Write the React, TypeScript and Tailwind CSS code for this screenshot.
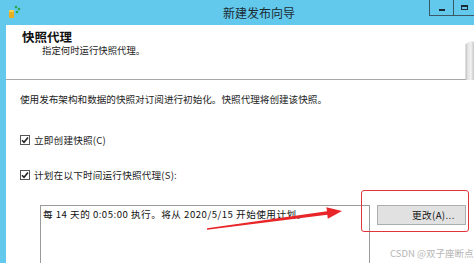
import React from 'react';

const FONT = "font-['Noto_Sans_CJK_SC','Noto_Sans',sans-serif]";

function WizardIcon() {
  return (
    <svg width="14" height="14" viewBox="0 0 14 14" className="mt-[5px] ml-[8px] flex-shrink-0">
      <rect x="1" y="5" width="5" height="8" rx="1" fill="#e8b020" />
      <rect x="1" y="5" width="5" height="2" rx="1" fill="#f6d35a" />
      <circle cx="8" cy="2" r="1.3" fill="#27a84a" />
      <circle cx="11" cy="4" r="1.3" fill="#27a84a" />
      <circle cx="9" cy="7" r="1.3" fill="#27a84a" />
    </svg>
  );
}

function Check({ label }: { label: string }) {
  return (
    <div className="flex items-center">
      <div className="w-[10px] h-[10px] border border-[#555] bg-white flex items-center justify-center">
        <svg width="8" height="8" viewBox="0 0 8 8">
          <path d="M1 4.2 L3 6.2 L7 1.5" fill="none" stroke="#222" strokeWidth="1.6" />
        </svg>
      </div>
      <span className="ml-[4px] text-[9.6px] leading-[12px] text-[#222] tracking-[0.2px]">{label}</span>
    </div>
  );
}

export default function App() {
  return (
    <div className={`relative w-[474px] h-[263px] overflow-hidden bg-[#62c9ec] ${FONT}`}>
      {/* title bar */}
      <div className="h-[25px] flex items-start">
        <WizardIcon />
        <div className="ml-[201px] mt-[5px] text-[12px] leading-[15px] text-[#1c2a33]">新建发布向导</div>
        <div className="ml-auto flex h-[16px]">
          <div className="w-[24px] h-[16px] border-l border-b border-[#3b5866] flex items-center justify-center">
            <div className="w-[6px] h-[2px] bg-[#1c2a33] mt-[4px]" />
          </div>
          <div className="w-[21px] h-[16px] border-l border-b border-[#3b5866] flex items-start justify-center">
            <div className="w-[7px] h-[5px] border border-[#1c2a33] border-t-2 mt-[5px]" />
          </div>
        </div>
      </div>

      <div className="flex h-[238px]">
        <div className="w-[6px] flex-shrink-0" />
        <div className="flex-1 bg-white flex flex-col">
          {/* header */}
          <div className="h-[55px] flex border-b border-[#a8a8a8] flex-shrink-0">
            <div className="flex-1 pl-[16px] pt-[5px]">
              <div className="text-[12.5px] leading-[14px] font-bold text-[#111]">快照代理</div>
              <div className="ml-[20px] text-[9.4px] leading-[12px] text-[#222]">指定何时运行快照代理。</div>
            </div>
            <svg width="10" height="40" viewBox="0 0 10 40" className="mt-[15px] flex-shrink-0">
              <defs>
                <linearGradient id="cyl" x1="0" x2="1" y1="0" y2="0">
                  <stop offset="0%" stopColor="#d8d8d8" />
                  <stop offset="60%" stopColor="#f2f2f2" />
                  <stop offset="100%" stopColor="#c8c8c8" />
                </linearGradient>
              </defs>
              <path d="M2 4 Q6 0 10 2 L10 40 L2 40 Z" fill="url(#cyl)" />
              <path d="M2 4 L2 40" stroke="#bdbdbd" strokeWidth="1" />
            </svg>
          </div>
          <div className="h-px bg-white" />

          {/* body */}
          <div className="pl-[14px] pt-[13px] flex flex-col">
            <div className="text-[9.6px] leading-[12px] text-[#222]">
              使用发布架构和数据的快照对订阅进行初始化。快照代理将创建该快照。
            </div>
            <div className="mt-[29px]">
              <Check label="立即创建快照(C)" />
            </div>
            <div className="mt-[23px]">
              <Check label="计划在以下时间运行快照代理(S):" />
            </div>
            <div className="mt-[24px] flex items-start">
              <div className="ml-[20px] w-[330px] h-[70px] border border-[#9a9a9a] bg-white px-[2px] pt-[2px]">
                <div className="text-[9.6px] leading-[12px] text-[#111] whitespace-nowrap tracking-[0.5px]">
                  每 14 天的 0:05:00 执行。将从 2020/5/15 开始使用计划。
                </div>
              </div>
              <div className="ml-[7px] w-[89px] h-[20px] bg-[#e1e1e1] border border-[#adadad] flex items-center pl-[34px]">
                <span className="text-[9.6px] leading-[12px] text-[#111] whitespace-nowrap tracking-[0.4px]">更改(A)...</span>
              </div>
            </div>
          </div>
        </div>
      </div>

      {/* annotation overlays */}
      <div className="absolute left-[361px] top-[190px] w-[108px] h-[42px] border border-[#e2353b] rounded-[3px]" />
      <svg className="absolute left-0 top-0" width="474" height="263" viewBox="0 0 474 263">
        <polygon
          points="207,228.3 327,211.2 326.4,207.3 342,211 327.8,218.7 327.3,214.8 207,229.7"
          fill="#e8262a"
        />
      </svg>
      <div className="absolute left-[390px] top-[247px] text-[9.5px] leading-[12px] text-[#b5b5b5] whitespace-nowrap">
        CSDN @双子座断点
      </div>
    </div>
  );
}
